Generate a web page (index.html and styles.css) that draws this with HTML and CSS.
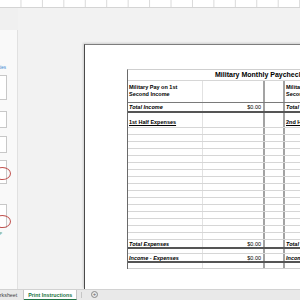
FILE: index.html
```html
<!DOCTYPE html>
<html lang="en">
<head>
    <meta charset="UTF-8">
    <meta name="viewport" content="width=device-width, initial-scale=1.0">
    <title>Print Preview</title>
    <link rel="stylesheet" href="styles.css">
</head>
<body>
    <div class="col-heads"></div>

    <div class="backstage">
        <div class="settings">
            <div class="settings-link">Printer Properties</div>
            <div class="setting-box tall"></div>
            <div class="setting-box second"></div>
            <div class="setting-box"></div>
            <div class="setting-box mid"></div>
            <div class="setting-box mid low"></div>
            <div class="settings-note">Page Setup</div>
            <div class="mark mark-one"></div>
            <div class="mark mark-two"></div>
        </div>

        <div class="preview">
            <div class="page">
                <div class="sheet">
                    <div class="row title"><div class="cell">Military Monthly Paycheck Budget</div></div>

                    <div class="row head">
                        <div class="cell a">Military Pay on 1st<br>Second Income</div>
                        <div class="cell b"></div>
                        <div class="cell c"></div>
                        <div class="cell d">Military Pay on 15th<br>Second Income</div>
                    </div>

                    <div class="row total">
                        <div class="cell a label">Total Income</div>
                        <div class="cell b amt">$0.00</div>
                        <div class="cell c"></div>
                        <div class="cell d label">Total Income</div>
                    </div>

                    <div class="row section">
                        <div class="cell a"><u>1st Half Expenses</u></div>
                        <div class="cell b"></div>
                        <div class="cell c"></div>
                        <div class="cell d"><u>2nd Half Expenses</u></div>
                    </div>

                    <div id="lines"></div>

                    <div class="row total sub">
                        <div class="cell a label">Total Expenses</div>
                        <div class="cell b amt">$0.00</div>
                        <div class="cell c"></div>
                        <div class="cell d label">Total Expenses</div>
                    </div>

                    <div class="row gap">
                        <div class="cell a"></div>
                        <div class="cell b"></div>
                        <div class="cell c"></div>
                        <div class="cell d"></div>
                    </div>

                    <div class="row total sub">
                        <div class="cell a label">Income - Expenses</div>
                        <div class="cell b amt">$0.00</div>
                        <div class="cell c"></div>
                        <div class="cell d label">Income - Expenses</div>
                    </div>

                    <div class="row end">
                        <div class="cell a"></div>
                        <div class="cell b"></div>
                        <div class="cell c"></div>
                        <div class="cell d"></div>
                    </div>
                </div>
            </div>
        </div>
    </div>

    <div class="tabs">
        <div class="tab first">Worksheet</div>
        <div class="tab active">Print Instructions</div>
        <div class="tab-sep"></div>
        <div class="tab-add">+</div>
    </div>

    <script>
        // filas vacias de gastos
        const lines = document.getElementById('lines');
        for (let i = 0; i < 16; i++) {
            const row = document.createElement('div');
            row.className = 'row line';
            row.innerHTML = '<div class="cell a"></div><div class="cell b"></div><div class="cell c"></div><div class="cell d"></div>';
            lines.appendChild(row);
        }
    </script>
</body>
</html>
```

FILE: styles.css
```css
/* Vista de impresion */
* {
    box-sizing: border-box;
}
html, body {
    margin: 0;
}
body {
    width: 300px;
    height: 300px;
    overflow: hidden;
    display: flex;
    flex-direction: column;
    font-family: 'Liberation Sans', Arial, sans-serif;
    background-color: #f0f0f0;
    color: #000;
}
.col-heads {
    flex: none;
    height: 8px;
    background-color: #fff;
    background-image: linear-gradient(to right, transparent 20.4px, #d9d9d9 20.4px);
    background-size: 21.45px 100%;
    border-bottom: 1px solid #d4d4d4;
}
.backstage {
    flex: 1;
    display: flex;
    min-height: 0;
}
.settings {
    width: 18px;
    flex: none;
    margin-top: 22px;
    padding-top: 35px;
    background-color: #f9f9f9;
    border-right: 1px solid #e1e1e1;
    position: relative;
    overflow: hidden;
}
.settings-link {
    font-size: 4.5px;
    line-height: 5px;
    height: 5px;
    color: #3c86d2;
    white-space: nowrap;
    margin-left: -29px;
}
.setting-box {
    width: 10px;
    height: 17px;
    margin-left: -3px;
    margin-top: 8px;
    background-color: #fff;
    border: 1px solid #c8c8c8;
}
.setting-box.tall {
    height: 25px;
    margin-top: 5px;
}
.setting-box.second {
    margin-top: 11px;
}
.setting-box.mid {
    height: 24px;
    margin-top: 7px;
}
.setting-box.low {
    margin-top: 20px;
}
.settings-note {
    font-size: 4px;
    line-height: 5px;
    color: #2f8f5b;
    white-space: nowrap;
    margin-top: 2px;
    margin-left: -19px;
}
.mark {
    position: absolute;
    left: -6px;
    width: 17px;
    height: 13px;
    border: 1px solid #c0504d;
    border-radius: 50%;
}
.mark-one {
    top: 137px;
}
.mark-two {
    top: 185px;
}
.preview {
    flex: 1;
    display: flex;
    padding: 36px 0 0 66px;
    overflow: hidden;
    background-color: #f2f2f2;
}
.page {
    flex: none;
    width: 300px;
    background-color: #fff;
    border-left: 1px solid #4a4a4a;
    border-top: 1px solid #7d7d7d;
    box-shadow: -1px -1px 2px rgba(0, 0, 0, 0.15);
    padding: 24px 0 0 42px;
}
.sheet {
    width: 250px;
    border-left: 1px solid #6a6a6a;
    border-top: 1px solid #cfcfcf;
    font-size: 5.5px;
}
.row {
    display: grid;
    grid-template-columns: 75px 60px 22px 93px;
    border-bottom: 1px solid #d6d6d6;
}
.cell {
    padding: 0 1px;
    white-space: nowrap;
    overflow: hidden;
    line-height: 7px;
}
.cell.a {
    border-right: 1px solid #e2e2e2;
}
.cell.c {
    border-left: 2px solid #a3a3a3;
    border-right: 2px solid #a3a3a3;
}
.cell.amt {
    text-align: right;
    padding-right: 2px;
}
.row.title {
    display: block;
    height: 11px;
}
.row.title .cell {
    font-size: 7px;
    font-weight: bold;
    line-height: 10px;
    padding-left: 87px;
}
.row.head {
    height: 22px;
    border-bottom-color: #7a7a7a;
    font-weight: bold;
}
.row.head .cell {
    padding-top: 3px;
}
.row.total {
    height: 10px;
    border-bottom: 2px solid #555;
}
.row.total .cell {
    line-height: 8px;
}
.row.total .label {
    font-style: italic;
    font-weight: bold;
}
.row.sub {
    height: 9px;
}
.row.sub .cell {
    line-height: 8px;
}
.row.section {
    height: 15px;
    font-weight: bold;
}
.row.section .cell {
    padding-top: 6px;
}
.row.line {
    height: 7px;
}
.row.gap {
    height: 5px;
}
.row.end {
    height: 6px;
    border-bottom-color: #cfcfcf;
}
.tabs {
    flex: none;
    height: 11px;
    display: flex;
    align-items: stretch;
    background-color: #e9e9e9;
    border-top: 1px solid #d2d2d2;
    font-size: 5.3px;
    overflow: hidden;
}
.tab {
    display: flex;
    align-items: center;
    padding: 0 6px;
    color: #444;
    border-right: 1px solid #c6c6c6;
    white-space: nowrap;
}
.tab.first {
    margin-left: -14px;
}
.tab.active {
    padding: 0 4px;
    background-color: #fff;
    color: #217346;
    font-weight: bold;
    border-bottom: 1px solid #217346;
}
.tab-sep {
    width: 1px;
    margin: 2px 0 2px 4px;
    background-color: #c6c6c6;
}
.tab-add {
    width: 7px;
    height: 7px;
    margin: 1px 0 0 9px;
    border: 1px solid #8a8a8a;
    border-radius: 50%;
    color: #666;
    font-size: 6px;
    line-height: 5px;
    text-align: center;
}
```
